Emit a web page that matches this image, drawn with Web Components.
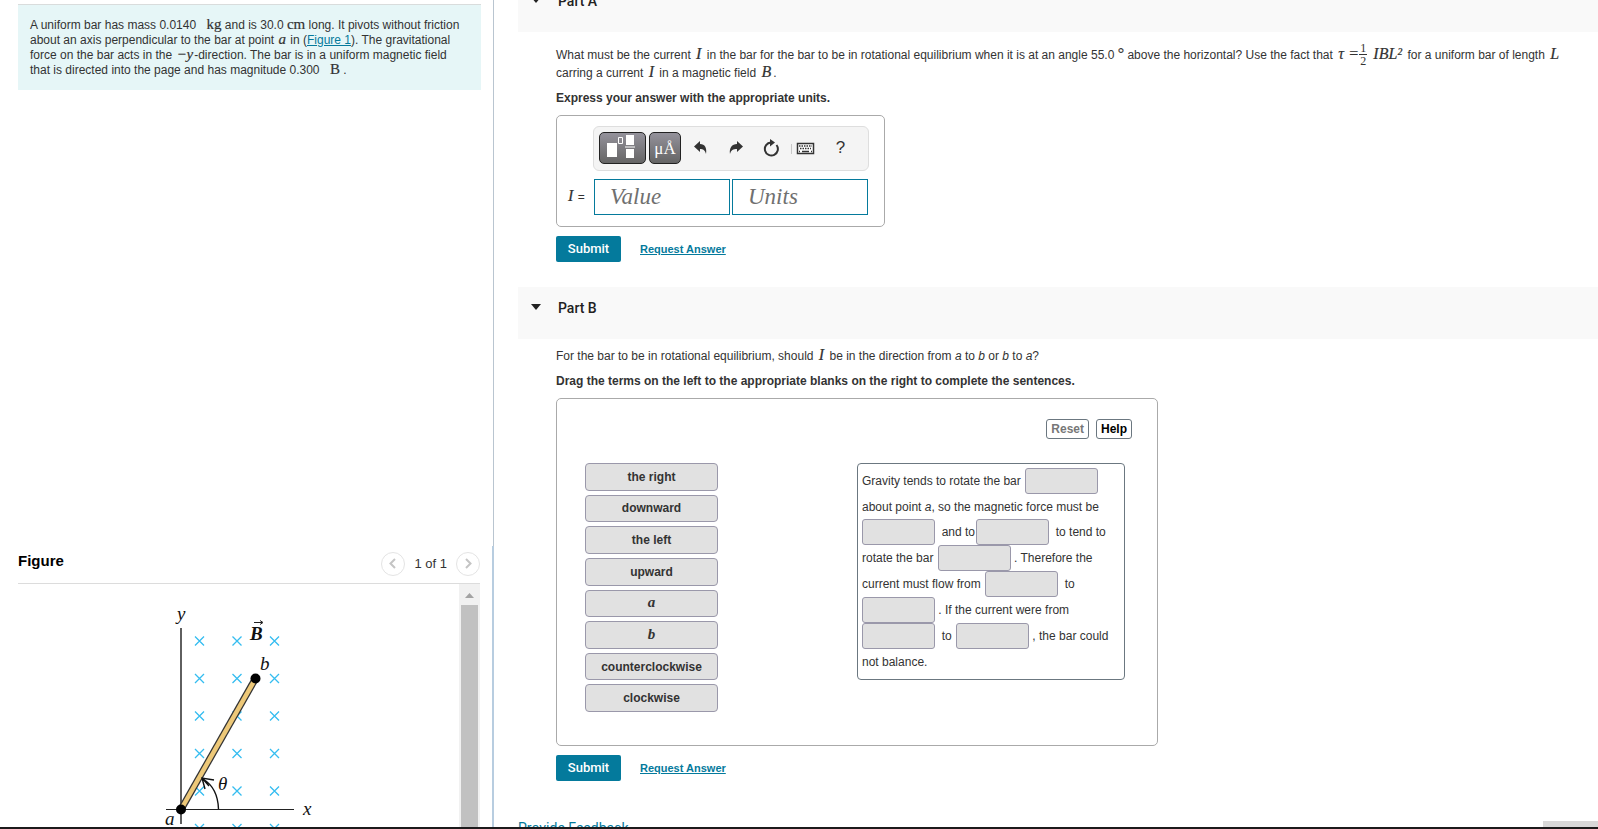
<!DOCTYPE html>
<html lang="en">
<head>
<meta charset="utf-8">
<title>Rotational equilibrium of a bar</title>
<style>
html, body { margin: 0; height: 100%; }
body { font: 12px/18px "Liberation Sans", Arial, sans-serif; color: #333; background: #fff; overflow: hidden; }
a { color: #047a9c; }
</style>
</head>
<body>
<assignment-page>
  <problem-intro slot="side">
    A uniform bar has mass 0.0140 &nbsp;<math-sym upright>kg</math-sym> and is 30.0 <math-sym upright>cm</math-sym> long. It pivots without friction<br>
    about an axis perpendicular to the bar at point <math-sym>a</math-sym> in (<a href="#figure">Figure 1</a>). The gravitational<br>
    force on the bar acts in the <math-sym>−y</math-sym>-direction. The bar is in a uniform magnetic field<br>
    that is directed into the page and has magnitude 0.300 &nbsp;<math-sym upright>B</math-sym> .
  </problem-intro>
  <figure-panel slot="side" id="figure"></figure-panel>

  <question-part name="Part A">
    <p slot="question">What must be the current <math-sym>I</math-sym> in the bar for the bar to be in rotational equilibrium when it is at an angle 55.0 <math-sym upright>°</math-sym> above the horizontal? Use the fact that <math-sym>τ</math-sym> <math-sym upright>=</math-sym><math-frac><span slot="top">1</span><span slot="bottom">2</span></math-frac><math-sym>IBL²</math-sym> for a uniform bar of length <math-sym>L</math-sym><br>carring a current <math-sym>I</math-sym> in a magnetic field <math-sym>B</math-sym>.</p>
    <span slot="instruction">Express your answer with the appropriate units.</span>
    <answer-entry></answer-entry>
  </question-part>

  <question-part name="Part B">
    <p slot="question">For the bar to be in rotational equilibrium, should <math-sym>I</math-sym> be in the direction from <i>a</i> to <i>b</i> or <i>b</i> to <i>a</i>?</p>
    <span slot="instruction">Drag the terms on the left to the appropriate blanks on the right to complete the sentences.</span>
    <term-sorter></term-sorter>
  </question-part>
</assignment-page>

<script>
function define(name, html, setup) {
  const template = document.createElement('template');
  template.innerHTML = html;
  customElements.define(name, class extends HTMLElement {
    constructor() {
      super();
      this.attachShadow({ mode: 'open' }).append(template.content.cloneNode(true));
    }
    connectedCallback() { if (setup) setup(this, this.shadowRoot); }
  });
}

define('math-sym', `
<style>
:host { display: inline; margin: 0 var(--sym-gap, 1px); font: italic var(--sym-size, 16px)/0 "Liberation Serif", serif; -webkit-text-stroke: .2px; }
:host([upright]) { margin: 0; font-style: normal; }
</style><slot></slot>`);

define('math-frac', `
<style>
:host { display: inline-grid; vertical-align: middle; margin: -6px 0 -4px 1px; font: 12px/12px "Liberation Serif", serif; text-align: center; }
.top { border-bottom: 1px solid #333; padding: 0 1px; }
</style><span class="top"><slot name="top"></slot></span><span><slot name="bottom"></slot></span>`);

define('assignment-page', `
<style>
:host { display: grid; grid-template: minmax(0, 1fr) 2px / 494px minmax(0, 1fr); height: 100vh; }
aside { display: flex; flex-direction: column; justify-content: space-between; box-sizing: border-box; padding-top: 4px; background: linear-gradient(#b9c5d0, #b9c5d0) right / 1px 100% no-repeat; overflow: hidden; }
main { position: relative; overflow: hidden; padding-left: 24px; }
.parts { margin-top: -20px; }
.feedback { display: block; margin-top: 38px; font: 14px/18px Roboto, sans-serif; text-decoration: none; color: #047a9c; }
.status { position: absolute; right: 0; bottom: 0; width: 55px; height: 6px; background: #d8d8d8; }
footer { grid-column: 1 / -1; background: #1c1a1b; }
</style>
<aside><slot name="side"></slot></aside>
<main>
  <div class="parts"><slot></slot></div>
  <a class="feedback" href="#feedback">Provide Feedback</a>
  <div class="status"></div>
</main>
<footer></footer>`);

define('problem-intro', `
<style>
:host { display: block; margin: 0 13px 0 18px; padding: 13px 12px 12px; border-top: 1px solid #d9dcdc; background: #e6f6f7; line-height: 15px; white-space: nowrap; --sym-size: 15px; }
</style><slot></slot>`);

define('figure-panel', `
<style>
:host { display: block; box-sizing: border-box; height: 281px; padding: 0 12px 0 18px; border-right: 2px solid #b8cde0; }
header { display: flex; align-items: start; height: 37px; border-bottom: 1px solid #dcdcdc; }
h2 { flex: 1; margin: 0; font-size: 15px; line-height: 30px; color: #000; }
nav { display: flex; align-items: center; gap: 9px; padding-top: 6px; font-size: 13px; line-height: 24px; }
button { width: 24px; height: 24px; padding: 0; border: 1px solid #e4e4e4; border-radius: 50%; background: #fff; display: grid; place-items: center; }
.view { display: flex; height: 243px; overflow: hidden; }
.picture { flex: 1; min-width: 0; display: flex; justify-content: center; }
.bar { width: 17px; padding: 0 2px; background: #f1f1f1; display: flex; flex-direction: column; }
.bar svg { display: block; height: 21px; }
.thumb { flex: 1; background: #c1c1c1; }
text { font: italic 19px "Liberation Serif", serif; fill: #111; }
</style>
<header>
  <h2>Figure</h2>
  <nav>
    <button aria-label="Previous figure"><svg width="12" height="12" fill="none" stroke="#c4c4c4" stroke-width="2"><path d="M8 1 3.500 5.500 8 10"/></svg></button>
    <span>1 of 1</span>
    <button aria-label="Next figure"><svg width="12" height="12" fill="none" stroke="#c4c4c4" stroke-width="2"><path d="M4 1 8.500 5.500 4 10"/></svg></button>
  </nav>
</header>
<div class="view">
  <div class="picture">
    <svg width="180" height="260" viewBox="149 584 180 260" role="img" aria-label="Bar ab at angle theta in a magnetic field">
      <g id="field" stroke="#35bdf0" stroke-width="1.300"></g>
      <path d="M181 628V824" stroke="#444" stroke-width="1.700"/>
      <path d="M166 809.500H294" stroke="#222" stroke-width="1.200"/>
      <path d="M181 809.500 255.500 678.500" stroke="#333" stroke-width="7"/>
      <path d="M181 809.500 255.500 678.500" stroke="#edc878" stroke-width="4.500"/>
      <path d="M218.500 809C218 795 213 785 203 779M214 780 202 778 205 789M202 778 209 786" fill="none" stroke="#111" stroke-width="1.400"/>
      <circle cx="181" cy="809.500" r="5"/><circle cx="255.500" cy="678.500" r="5"/>
      <text x="177" y="620">y</text>
      <text x="250" y="640" style="font-weight:bold">B</text>
      <path d="M254 622.500H262M260 620.500 263 622.500 260 624.500" fill="none" stroke="#222"/>
      <text x="260" y="670">b</text>
      <text x="218" y="790">θ</text>
      <text x="303" y="815">x</text>
      <text x="165" y="825">a</text>
    </svg>
  </div>
  <div class="bar"><svg width="17"><path d="M4 14 8.500 9 13 14Z" fill="#a3a3a3"/></svg><div class="thumb"></div></div>
</div>`, (el, root) => {
  let marks = '';
  for (const y of [641, 678.5, 716, 753.5, 791, 828.5])
    for (const x of [199.5, 237, 274.5])
      marks += `<path d="M${x - 4.5} ${y - 4.5}l9 9m0-9l-9 9"/>`;
  root.getElementById('field').innerHTML = marks;
});

define('question-part', `
<style>
:host { display: block; }
header { display: flex; align-items: start; gap: 17px; height: 41px; padding: 11px 0 0 13px; background: #f9f9f9; }
header svg { margin-top: 6px; }
h2 { margin: 0; font: 500 14px/20px Roboto, sans-serif; color: #222; }
.body { padding: 8px 0 0 38px; }
:host([name="Part A"]) .body { padding-top: 14px; }
::slotted(p) { margin: 0 0 7px; white-space: nowrap; --sym-gap: 2px; }
.instruction { margin-bottom: 8px; font-weight: bold; }
.actions { display: flex; align-items: center; gap: 19px; margin: 9px 0 25px; }
.submit { height: 26px; width: 65px; padding: 0; border: 0; border-radius: 2px; background: #047a9c; color: #fff; font: 500 13px/24px Roboto, sans-serif; }
.actions a { color: #047a9c; font: bold 11px/18px "Liberation Sans", sans-serif; }
</style>
<header><svg width="10" height="6"><path d="M0 0H10L5 6Z" fill="#222"/></svg><h2></h2></header>
<div class="body">
  <slot name="question"></slot>
  <div class="instruction"><slot name="instruction"></slot></div>
  <slot></slot>
  <div class="actions"><button class="submit">Submit</button><a href="#answer">Request Answer</a></div>
</div>`, (el, root) => { root.querySelector('h2').textContent = el.getAttribute('name'); });

define('answer-entry', `
<style>
:host { display: grid; grid-template-columns: 26px 276px; grid-template-rows: 45px 36px; justify-content: start; row-gap: 8px; box-sizing: border-box; width: 329px; height: 112px; padding: 10px; border: 1px solid #aaa; border-radius: 5px; }
.tools { grid-column: 2; display: flex; align-items: center; box-sizing: border-box; height: 45px; padding: 0 5px 2px; border: 1px solid #dedede; border-radius: 6px; background: #f4f4f4; }
button { padding: 0; border: 0; background: none; width: 35px; height: 32px; display: grid; place-items: center; color: #333; font: 17px/32px "Liberation Sans", sans-serif; }
.dark { box-sizing: border-box; border: 1px solid #222; border-radius: 5px; background: linear-gradient(#94929b, #656565); color: #fff; }
.tpl { width: 47px; }
.unit { width: 32px; margin: 0 2px 0 3px; font-family: "Liberation Serif", serif; }
label { align-self: center; font-size: 12px; white-space: nowrap; }
.fields { display: grid; grid-template-columns: 1fr 1fr; gap: 2px; padding: 0 1px; height: 36px; }
input { box-sizing: border-box; width: 100%; min-width: 0; height: 36px; padding: 0 15px; border: 1px solid #047a9c; border-radius: 0; background: #fff; font: italic 23px "Liberation Serif", serif; color: #333; }
input::placeholder { color: #707070; opacity: 1; }
</style>
<div class="tools">
  <button class="dark tpl" aria-label="Templates"><svg width="33" height="26" fill="#fff"><path d="M1 8h10v14H1zM20 0h8v10h-8zM20 14h8v9h-8zM19 11.500h10v1H19z"/><path d="M12.500 2.500h4v6h-4z" fill="none" stroke="#fff"/></svg></button>
  <button class="dark unit" aria-label="Symbols">μÅ</button>
  <button aria-label="Undo"><svg width="14" height="14"><path d="M0 5.500 6 0v3c5 0 7 4 6 10-1-4-3-5-6-5v3z" fill="#333"/></svg></button>
  <button aria-label="Redo"><svg width="14" height="14"><path d="M14 5.500 8 0v3C3 3 0 7 1 13c1-4 3-5 7-5v3z" fill="#333"/></svg></button>
  <button aria-label="Reset"><svg width="18" height="18"><path d="M9 3.500A6.500 6.500 0 1 0 14.500 6" fill="none" stroke="#333" stroke-width="2"/><path d="M8 0 13 3.500 8 7.500z" fill="#333"/></svg></button>
  <button aria-label="Keyboard"><svg width="30" height="14"><path d="M.5 3V13" stroke="#c8c8c8"/><rect x="6.500" y="2.500" width="16" height="10" fill="#fff" stroke="#333" stroke-width="1.500"/><path d="M8 5H21M9 7.500H20" stroke="#333" stroke-width="1.500" stroke-dasharray="1.500 1"/><path d="M8 10.500H9M11 10.500H18M20 10.500H21" stroke="#333" stroke-width="1.500"/></svg></button>
  <button aria-label="Help">?</button>
</div>
<label for="value"><math-sym>I</math-sym> =</label>
<div class="fields"><input id="value" placeholder="Value"><input aria-label="Units" placeholder="Units"></div>`);

define('term-sorter', `
<style>
:host { display: block; box-sizing: border-box; width: 602px; height: 348px; padding: 20px 25px 33px 28px; border: 1px solid #aaa; border-radius: 5px; }
.top { display: flex; justify-content: flex-end; gap: 7px; margin-bottom: 24px; }
.top button { height: 20px; padding: 0 4px; border: 1px solid #6b7780; border-radius: 3px; background: #fff; font: bold 12px/16px "Liberation Sans", sans-serif; color: #000; }
.top button:disabled { color: #777; }
.cols { display: flex; justify-content: space-between; align-items: start; padding-right: 7px; }
.terms { display: grid; grid-auto-rows: 1fr; gap: 4px; width: 133px; height: 249px; }
.terms button { padding: 0; min-height: 0; border: 1px solid #9a98aa; border-radius: 4px; background: #e1e1e1; font: bold 12px/16px "Liberation Sans", sans-serif; color: #333; }
.terms math-sym { font-weight: bold; font-size: 15px; -webkit-text-stroke: 0; }
.sentence { box-sizing: border-box; width: 268px; height: 217px; padding: 4px; border: 1px solid #6b7780; border-radius: 4px; }
.row { display: flex; align-items: center; height: 26px; white-space: pre; }
.row.text { height: 25px; }
.blank { box-sizing: border-box; width: 73px; height: 26px; border: 1px solid #9a98aa; border-radius: 3px; background: #e1e1e1; }
.row span + .blank { margin-left: 1px; }
</style>
<div class="top"><button disabled>Reset</button><button>Help</button></div>
<div class="cols">
  <div class="terms">
    <button>the right</button><button>downward</button><button>the left</button><button>upward</button>
    <button><math-sym>a</math-sym></button><button><math-sym>b</math-sym></button>
    <button>counterclockwise</button><button>clockwise</button>
  </div>
  <div class="sentence">
    <div class="row"><span>Gravity tends to rotate the bar </span><span class="blank"></span></div>
    <div class="row text"><span>about point <i>a</i>, so the magnetic force must be</span></div>
    <div class="row"><span class="blank"></span><span>  and to</span><span class="blank"></span><span>  to tend to</span></div>
    <div class="row"><span>rotate the bar </span><span class="blank"></span><span> . Therefore the</span></div>
    <div class="row"><span>current must flow from </span><span class="blank"></span><span>  to</span></div>
    <div class="row"><span class="blank"></span><span> . If the current were from</span></div>
    <div class="row"><span class="blank"></span><span>  to </span><span class="blank"></span><span> , the bar could</span></div>
    <div class="row text"><span>not balance.</span></div>
  </div>
</div>`);
</script>
</body>
</html>
